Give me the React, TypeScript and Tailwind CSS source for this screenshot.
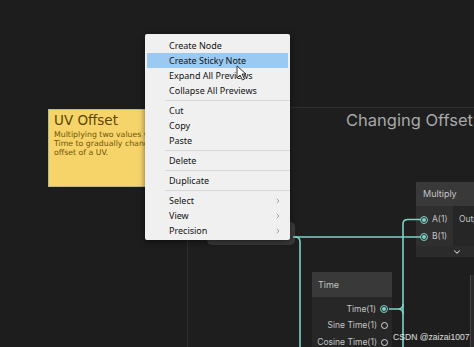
import { ChevronDown, ChevronRight } from 'lucide-react';

type Item = { label: string; sub?: boolean; active?: boolean } | 'sep';

const menuItems: Item[] = [
  { label: 'Create Node' },
  { label: 'Create Sticky Note', active: true },
  { label: 'Expand All Previews' },
  { label: 'Collapse All Previews' },
  'sep',
  { label: 'Cut' },
  { label: 'Copy' },
  { label: 'Paste' },
  'sep',
  { label: 'Delete' },
  'sep',
  { label: 'Duplicate' },
  'sep',
  { label: 'Select', sub: true },
  { label: 'View', sub: true },
  { label: 'Precision', sub: true },
];

function Port({ filled, hollow }: { filled?: boolean; hollow?: boolean }) {
  if (hollow) {
    return <span className="block w-[7px] h-[7px] rounded-full border-[1.5px] border-[#d8d8d8]" />;
  }
  return (
    <span className="flex items-center justify-center w-[8px] h-[8px] rounded-full border border-[#7fd3c6]">
      {filled && <span className="block w-[4px] h-[4px] rounded-full bg-[#7fd3c6]" />}
    </span>
  );
}

function ContextMenu() {
  return (
    <div className="absolute left-[145px] top-[34px] w-[145px] h-[206px] bg-[#f0f0f0] rounded-[2px] shadow-[0_2px_6px_rgba(0,0,0,0.5)] px-[2px] pt-[4px] font-['Noto_Sans',sans-serif] text-[9px] text-[#141414]">
      {menuItems.map((item, i) =>
        item === 'sep' ? (
          <div key={i} className="h-[5px] flex items-center pl-[18px] -mr-[2px]">
            <div className="h-px w-full bg-[#d6d6d6]" />
          </div>
        ) : (
          <div
            key={i}
            className={`h-[15px] flex items-center pl-[22px] pr-[6px] ${item.active ? 'bg-[#9ac9f1]' : ''}`}
          >
            <span className="flex-1 leading-none">{item.label}</span>
            {item.sub && <ChevronRight size={8} strokeWidth={1.5} className="text-[#555]" />}
          </div>
        )
      )}
    </div>
  );
}

export default function App() {
  return (
    <div className="relative w-[474px] h-[347px] overflow-hidden bg-[#1d1d1d] font-['Inter',sans-serif]">
      {/* group */}
      <div className="absolute left-[187px] top-[107px] w-[320px] h-[270px] border border-[#2e2e2e] bg-[#1e1e1e]">
        <div className="pl-[158px] pt-[2px] text-[16.5px] leading-[20px] text-[#a9a9a9] whitespace-nowrap">
          Changing Offset
        </div>
      </div>

      {/* property node hidden under menu */}
      <div className="absolute left-[207px] top-[222px] w-[88px] h-[23px] rounded-[5px] bg-[#3b3b3b]" />

      {/* sticky note */}
      <div className="absolute left-[48px] top-[109px] w-[110px] h-[78px] bg-[#f7d46a] border border-[#b5bd8a] px-[5px] pt-[1px] font-['DejaVu_Sans',sans-serif] text-[#5c4500] whitespace-nowrap">
        <div className="text-[13.5px] leading-[18px]">UV Offset</div>
        <div className="mt-[1px] text-[7.8px] leading-[9px] text-[#6e5408]">
          <div>Multiplying two values with</div>
          <div>Time to gradually change the</div>
          <div>offset of a UV.</div>
        </div>
      </div>

      {/* multiply node */}
      <div className="absolute left-[416px] top-[182px] w-[80px] flex flex-col text-[8.5px] text-[#c4c4c4]">
        <div className="h-[24px] bg-[#393939] flex items-center pl-[7px] text-[9px]">Multiply</div>
        <div className="flex h-[40px]">
          <div className="w-[37px] bg-[#2f2f2f] pt-[5px] pl-[4px]">
            <div className="h-[17px] flex items-center gap-[4px]">
              <Port filled />
              <span>A(1)</span>
            </div>
            <div className="h-[17px] flex items-center gap-[4px]">
              <Port filled />
              <span>B(1)</span>
            </div>
          </div>
          <div className="flex-1 bg-[#262626] pt-[5px] pl-[6px]">
            <div className="h-[17px] flex items-center">Output</div>
          </div>
        </div>
        <div className="h-[11px] bg-[#2b2b2b] flex items-center pl-[36px]">
          <ChevronDown size={10} strokeWidth={2.5} className="text-[#d0d0d0]" />
        </div>
      </div>

      {/* right partial node */}
      <div className="absolute left-[470px] top-[275px] w-[20px] h-[90px] bg-[#2a2a2a] border-l border-[#454545]" />

      {/* time node */}
      <div className="absolute left-[312px] top-[272px] w-[80px] h-[90px] flex flex-col text-[8.5px] text-[#c4c4c4]">
        <div className="h-[25px] bg-[#393939] flex items-center pl-[6px] text-[9px]">Time</div>
        <div className="flex-1 bg-[#272727] pt-[4px] pr-[4px]">
          <div className="h-[16.5px] flex items-center justify-end gap-[4px]">
            <span>Time(1)</span>
            <Port filled />
          </div>
          <div className="h-[16.5px] flex items-center justify-end gap-[4px]">
            <span>Sine Time(1)</span>
            <Port hollow />
          </div>
          <div className="h-[16.5px] flex items-center justify-end gap-[4px]">
            <span>Cosine Time(1)</span>
            <Port hollow />
          </div>
        </div>
      </div>

      {/* wires */}
      <svg className="absolute inset-0 pointer-events-none" width="474" height="347" viewBox="0 0 474 347" fill="none">
        <g stroke="#7fd3c6" strokeWidth="1.6">
          <path d="M293 237 H421" />
          <path d="M295 237 Q300 237 300 242 V347" />
          <path d="M403 347 V224 Q403 219.5 408 219.5 H421" />
          <path d="M389 309 H398 Q403 309 403 304 M398 309 Q403 309 403 314" />
        </g>
      </svg>

      <ContextMenu />

      {/* cursor */}
      <svg className="absolute left-[236px] top-[65px]" width="11" height="16" viewBox="0 0 11 16">
        <path d="M1 1 V13 L4 10 L6.5 15 L8.5 14 L6 9 H10 Z" fill="#fff" stroke="#222" strokeWidth="0.9" strokeLinejoin="round" />
      </svg>

      <div className="absolute left-[393px] top-[331px] text-[8.6px] leading-[12px] text-white/85 font-['Liberation_Sans',sans-serif] whitespace-nowrap">
        CSDN @zaizai1007
      </div>
    </div>
  );
}
